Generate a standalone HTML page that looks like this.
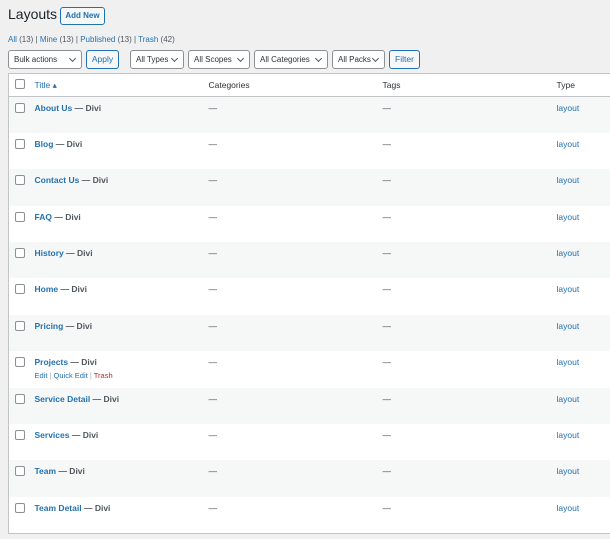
<!DOCTYPE html>
<html><head><style>
*{box-sizing:border-box;margin:0;padding:0}
body{width:610px;height:539px;overflow:hidden;background:#f0f0f1;font-family:"Liberation Sans",sans-serif;font-size:8.5px;color:#3c434a;position:relative}
h1{position:absolute;left:8px;top:6px;font-size:14px;font-weight:400;color:#1d2327;white-space:nowrap}
.btn{position:absolute;height:18px;border:1px solid #2271b1;color:#2271b1;background:#f6f7f7;border-radius:3px;font-size:8.5px;line-height:16px;text-align:center;white-space:nowrap}
.sel{position:absolute;top:50px;height:19px;border:1px solid #8c8f94;background:#fff;border-radius:3px;font-size:8px;line-height:17px;padding-left:5px;color:#2c3338;white-space:nowrap}
.sel:after{content:"";position:absolute;right:6px;top:5px;width:4px;height:4px;border-right:1.2px solid #50575e;border-bottom:1.2px solid #50575e;transform:rotate(45deg)}
.sub{position:absolute;left:8px;top:35px;font-size:8px;color:#50575e;white-space:nowrap}
.sub b{font-weight:400;color:#2271b1}
table{position:absolute;left:8px;top:73px;width:610px;border-collapse:collapse;border:1px solid #c3c4c7;background:#fff}
th{height:23px;text-align:left;font-weight:400;font-size:8.5px;color:#2c3338;border-bottom:1px solid #c3c4c7;padding:0}
td{height:36.4px;vertical-align:top;padding-top:6px;font-size:8.5px}
tr.g td{background:#f6f7f7}
.cb{display:inline-block;width:10px;height:10px;border:1px solid #8c8f94;border-radius:2px;background:#fff;margin-left:6px}
td.c1,th.c1{width:26px}
.t{color:#2271b1;font-weight:700}
.t span{color:#50575e}
.ty{color:#2271b1}
.ra{font-size:7.5px;color:#2271b1;margin-top:4px}
</style></head><body>
<h1>Layouts</h1>
<div class="btn" style="left:60px;top:7px;width:45px;font-weight:700;font-size:8px">Add New</div>
<div class="sub"><b>All</b> (13) | <b>Mine</b> (13) | <b>Published</b> (13) | <b>Trash</b> (42)</div>
<div class="sel" style="left:8px;width:74px">Bulk actions</div>
<div class="btn" style="left:86px;top:50px;width:33px;height:19px">Apply</div>
<div class="sel" style="left:130px;width:54px">All Types</div>
<div class="sel" style="left:188px;width:62px">All Scopes</div>
<div class="sel" style="left:254px;width:74px">All Categories</div>
<div class="sel" style="left:332px;width:53px">All Packs</div>
<div class="btn" style="left:389px;top:50px;width:31px;height:19px">Filter</div>
<table>
<tr><th class="c1"><span class="cb"></span></th><th style="width:174px;color:#2271b1">Title ▴</th><th style="width:174px">Categories</th><th style="width:174px">Tags</th><th>Type</th></tr>
<tr class="g"><td class="c1"><span class="cb"></span></td><td class="t">About Us <span>— Divi</span></td><td>—</td><td>—</td><td class="ty">layout</td></tr>
<tr><td class="c1"><span class="cb"></span></td><td class="t">Blog <span>— Divi</span></td><td>—</td><td>—</td><td class="ty">layout</td></tr>
<tr class="g"><td class="c1"><span class="cb"></span></td><td class="t">Contact Us <span>— Divi</span></td><td>—</td><td>—</td><td class="ty">layout</td></tr>
<tr><td class="c1"><span class="cb"></span></td><td class="t">FAQ <span>— Divi</span></td><td>—</td><td>—</td><td class="ty">layout</td></tr>
<tr class="g"><td class="c1"><span class="cb"></span></td><td class="t">History <span>— Divi</span></td><td>—</td><td>—</td><td class="ty">layout</td></tr>
<tr><td class="c1"><span class="cb"></span></td><td class="t">Home <span>— Divi</span></td><td>—</td><td>—</td><td class="ty">layout</td></tr>
<tr class="g"><td class="c1"><span class="cb"></span></td><td class="t">Pricing <span>— Divi</span></td><td>—</td><td>—</td><td class="ty">layout</td></tr>
<tr><td class="c1"><span class="cb"></span></td><td class="t">Projects <span>— Divi</span><div class="ra" style="font-weight:400">Edit <span style="color:#a7aaad">|</span> Quick Edit <span style="color:#a7aaad">|</span> <span style="color:#b32d2e">Trash</span></div></td><td>—</td><td>—</td><td class="ty">layout</td></tr>
<tr class="g"><td class="c1"><span class="cb"></span></td><td class="t">Service Detail <span>— Divi</span></td><td>—</td><td>—</td><td class="ty">layout</td></tr>
<tr><td class="c1"><span class="cb"></span></td><td class="t">Services <span>— Divi</span></td><td>—</td><td>—</td><td class="ty">layout</td></tr>
<tr class="g"><td class="c1"><span class="cb"></span></td><td class="t">Team <span>— Divi</span></td><td>—</td><td>—</td><td class="ty">layout</td></tr>
<tr><td class="c1"><span class="cb"></span></td><td class="t">Team Detail <span>— Divi</span></td><td>—</td><td>—</td><td class="ty">layout</td></tr>
</table>
</body></html>
